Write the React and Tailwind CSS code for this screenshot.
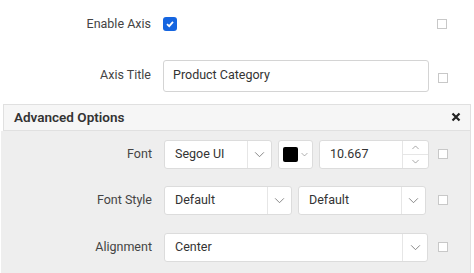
import { useState } from "react";

const Chevron = ({ className = "" }) => (
  <svg viewBox="0 0 12 8" className={className} fill="none" stroke="#777" strokeWidth="1">
    <path d="M1 1.5 L6 6.5 L11 1.5" />
  </svg>
);

const SmallBox = () => (
  <div className="w-[10px] h-[10px] border border-[#c8c8c8] bg-white shrink-0" />
);

const Select = ({ value, width, arrowW = 24 }) => (
  <div
    className="h-[29px] flex bg-white border border-[#dcdcdc] rounded-[3px] shrink-0"
    style={{ width }}
  >
    <div className="flex-1 flex items-center pl-[10px] text-[12.5px] text-[#333]">
      {value}
    </div>
    <div
      className="flex items-center justify-center border-l border-[#e6e6e6]"
      style={{ width: arrowW }}
    >
      <Chevron className="w-[11px] h-[7px]" />
    </div>
  </div>
);

const Row = ({ label, children, className = "" }) => (
  <div className={"flex items-center " + className}>
    <div className="w-[151px] text-right text-[12.5px] text-[#444] shrink-0">{label}</div>
    <div className="ml-[12px] flex items-center">{children}</div>
  </div>
);

export default function App() {
  const [enabled, setEnabled] = useState(true);
  return (
    <div
      className="w-[474px] h-[273px] bg-white overflow-hidden"
      style={{ fontFamily: "Roboto, 'Liberation Sans', sans-serif" }}
    >
      <div className="pt-[15px]">
        <Row label="Enable Axis">
          <button
            onClick={() => setEnabled(!enabled)}
            className="w-[14px] h-[14px] rounded-[3px] bg-[#1565e0] flex items-center justify-center"
          >
            {enabled && (
              <svg viewBox="0 0 10 10" className="w-[10px] h-[10px]" fill="none" stroke="white" strokeWidth="1.8">
                <path d="M2 5.2 L4.2 7.2 L8 2.8" />
              </svg>
            )}
          </button>
          <div className="ml-[260px]">
            <SmallBox />
          </div>
        </Row>
        <Row label="Axis Title" className="mt-[26px]">
          <div className="w-[266px] h-[32px] border border-[#d4d4d4] rounded-[3px] flex items-center pl-[9px] text-[12.5px] text-[#333]">
            Product Category
          </div>
          <div className="ml-[9px] mt-[4px]">
            <SmallBox />
          </div>
        </Row>
      </div>

      <div className="mt-[12px] mx-[3px] border-t border-x border-[#e0e0e0]">
        <div className="h-[26px] bg-[#f6f6f6] border-b border-[#e0e0e0] flex items-center justify-between pl-[10px] pr-[9px]">
          <span className="text-[13.5px] font-semibold text-[#333]">Advanced Options</span>
          <svg viewBox="0 0 10 10" className="w-[10px] h-[10px]" stroke="#222" strokeWidth="2.2">
            <path d="M1.5 1.5 L8.5 8.5 M8.5 1.5 L1.5 8.5" />
          </svg>
        </div>
        <div className="bg-[#eeeeee] h-[160px] -ml-[3px] pt-[9px]">
          <Row label="Font">
            <Select value="Segoe UI" width={108} arrowW={24} />
            <div className="ml-[6px] w-[35px] h-[29px] bg-white border border-[#dcdcdc] rounded-[3px] flex items-center pl-[4px] gap-[3px]">
              <div className="w-[15px] h-[15px] bg-black rounded-[2px]" />
              <Chevron className="w-[7px] h-[5px]" />
            </div>
            <div className="ml-[6px] w-[110px] h-[29px] bg-white border border-[#dcdcdc] rounded-[3px] flex">
              <div className="flex-1 flex items-center pl-[10px] text-[12.5px] text-[#333]">10.667</div>
              <div className="w-[26px] border-l border-[#e6e6e6] flex flex-col">
                <div className="flex-1 flex items-center justify-center border-b border-[#e6e6e6]">
                  <Chevron className="w-[9px] h-[5px] rotate-180" />
                </div>
                <div className="flex-1 flex items-center justify-center">
                  <Chevron className="w-[9px] h-[5px]" />
                </div>
              </div>
            </div>
            <div className="ml-[9px]">
              <SmallBox />
            </div>
          </Row>
          <Row label="Font Style" className="mt-[17px]">
            <Select value="Default" width={128} arrowW={24} />
            <div className="ml-[6px]">
              <Select value="Default" width={128} arrowW={24} />
            </div>
            <div className="ml-[12px]">
              <SmallBox />
            </div>
          </Row>
          <Row label="Alignment" className="mt-[18px]">
            <Select value="Center" width={264} arrowW={25} />
            <div className="ml-[10px]">
              <SmallBox />
            </div>
          </Row>
        </div>
      </div>
    </div>
  );
}
